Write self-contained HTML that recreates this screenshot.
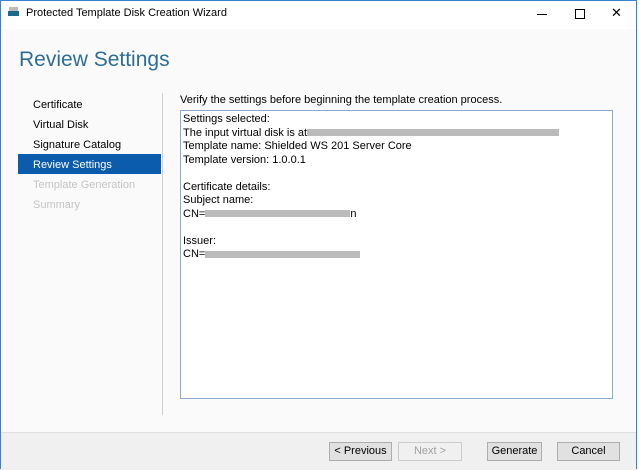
<!DOCTYPE html>
<html><head><style>
body{margin:0;width:639px;height:469px;overflow:hidden;font-family:"Liberation Sans",sans-serif;font-size:11px;color:#000;background:#fafafa;position:relative}
.a{position:absolute}
.nav{position:absolute;left:33px;font-size:11px;line-height:20px}
.btn{position:absolute;top:442px;height:17px;border:1px solid #adadad;background:#e1e1e1;text-align:center;line-height:17px;font-size:11px}
.blur{display:inline-block;height:7px;background:#bbb;vertical-align:middle}
</style></head><body>
<div class="a" style="left:0;top:0;width:639px;height:29px;background:#fff"></div>
<div class="a" style="left:0;top:0;width:1px;height:469px;background:#3b7fd0"></div>
<div class="a" style="left:636px;top:0;width:1px;height:469px;background:#3b7fd0"></div>
<div class="a" style="left:0;top:0;width:637px;height:1px;background:#3b7fd0"></div>
<div class="a" style="left:9px;top:7px;width:9px;height:4px;background:#bbb"></div>
<div class="a" style="left:8px;top:11px;width:11px;height:5px;background:#1a6a8a"></div>
<div class="a" style="left:26px;top:7px;font-size:11px">Protected Template Disk Creation Wizard</div>
<div class="a" style="left:537px;top:14px;width:10px;height:1px;background:#000"></div>
<div class="a" style="left:575px;top:9px;width:8px;height:8px;border:1px solid #000"></div>
<div class="a" style="left:611px;top:5px;font-size:13px">✕</div>
<div class="a" style="left:19px;top:48px;font-size:21px;color:#2e6e95">Review Settings</div>
<div class="nav" style="top:95px">Certificate</div>
<div class="nav" style="top:115px">Virtual Disk</div>
<div class="nav" style="top:135px">Signature Catalog</div>
<div class="a" style="left:18px;top:154px;width:143px;height:20px;background:#0b5cad"></div>
<div class="nav" style="top:155px;color:#fff">Review Settings</div>
<div class="nav" style="top:175px;color:#c4c4c4">Template Generation</div>
<div class="nav" style="top:195px;color:#c4c4c4">Summary</div>
<div class="a" style="left:162px;top:93px;width:1px;height:322px;background:#d0d0d0"></div>
<div class="a" style="left:180px;top:94px">Verify the settings before beginning the template creation process.</div>
<div class="a" style="left:180px;top:110px;border:1px solid #8aaad2;background:#fff;line-height:13.5px;padding:2px 0 0 2px;box-sizing:border-box;width:433px;height:289px">
Settings selected:<br>The input virtual disk is at<span class="blur" style="width:252px"></span><br>Template name: Shielded WS 201 Server Core<br>Template version: 1.0.0.1<br><br>Certificate details:<br>Subject name:<br>CN=<span class="blur" style="width:145px"></span>n<br><br>Issuer:<br>CN=<span class="blur" style="width:155px"></span>
</div>
<div class="a" style="left:1px;top:432px;width:635px;height:37px;background:#f0f0f0;border-top:1px solid #dfdfdf"></div>
<div class="btn" style="left:329px;width:61px">&lt; Previous</div>
<div class="btn" style="left:398px;width:62px;color:#a0a0a0;border-color:#ccc;background:#f0f0f0">Next &gt;</div>
<div class="btn" style="left:487px;width:53px">Generate</div>
<div class="btn" style="left:557px;width:61px">Cancel</div>
</body></html>
